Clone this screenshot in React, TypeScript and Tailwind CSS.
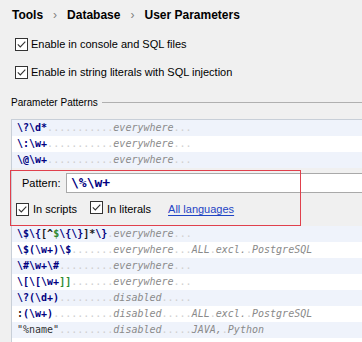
import React from "react";

type Seg = { t: string; c?: string };

const N = "text-[#000080]";
const K = "text-[#1a1a1a]";
const G = "text-[#2f8a2f]";

function Check() {
  return (
    <span className="inline-flex w-[13px] h-[13px] shrink-0 border border-[#333333] bg-white items-center justify-center">
      <svg width="11" height="11" viewBox="0 0 11 11">
        <path d="M1.8 5.4 L4.3 7.9 L9.3 2.6" fill="none" stroke="#333333" strokeWidth="1.1" />
      </svg>
    </span>
  );
}

function Dots({ n }: { n: number }) {
  return <span className="text-[#cfcfcf] font-normal">{".".repeat(Math.max(0, n))}</span>;
}

function Extra({ text }: { text: string }) {
  return (
    <span className="italic text-[#8a8a8a] font-normal">
      {text.split("").map((ch, i) =>
        ch === " " ? (
          <span key={i} className="text-[#cfcfcf] not-italic">.</span>
        ) : (
          <span key={i}>{ch}</span>
        )
      )}
    </span>
  );
}

function Row({ pat, scope, extra, blue }: { pat: Seg[]; scope: string; extra?: string; blue: boolean }) {
  const len = pat.reduce((n, s) => n + s.t.length, 0);
  return (
    <div
      className={`h-[16px] leading-[16px] pl-[5px] whitespace-pre text-[10px] font-['DejaVu_Sans_Mono',monospace] ${
        blue ? "bg-[#eff3fb]" : "bg-white"
      }`}
    >
      <span className="font-bold">
        {pat.map((s, i) => (
          <span key={i} className={s.c ?? N}>
            {s.t}
          </span>
        ))}
      </span>
      <Dots n={16 - len} />
      <span className="italic text-[#8a8a8a]">{scope}</span>
      <Dots n={13 - scope.length} />
      {extra ? <Extra text={extra} /> : null}
    </div>
  );
}

export default function App() {
  return (
    <div className="relative w-[362px] h-[342px] overflow-hidden bg-[#f0f0f0] text-[11px] text-black font-['Liberation_Sans',Arial,sans-serif]">
      {/* breadcrumb */}
      <div className="h-[30px] flex items-center pl-[12px] text-[12px] font-bold">
        <span>Tools</span>
        <span className="mx-[10px] font-normal text-[#808080]">›</span>
        <span>Database</span>
        <span className="mx-[10px] font-normal text-[#808080]">›</span>
        <span>User Parameters</span>
      </div>

      <div className="h-[28px] flex items-center pl-[15px] gap-[3px]">
        <Check />
        <span>Enable in console and SQL files</span>
      </div>
      <div className="h-[28px] flex items-center pl-[15px] gap-[3px]">
        <Check />
        <span>Enable in string literals with SQL injection</span>
      </div>

      <div className="h-[33px] flex items-center pl-[11px] gap-[4px] text-[10px] pb-[1px]">
        <span>Parameter Patterns</span>
        <div className="flex-1 border-t border-[#b0b0b0]" />
      </div>

      {/* list */}
      <div className="ml-[11px] border-l border-t border-[#c8cfd8] bg-white">
        <Row blue pat={[{ t: "\\?\\d*" }]} scope="everywhere" />
        <Row blue={false} pat={[{ t: "\\:\\w+" }]} scope="everywhere" />
        <Row blue pat={[{ t: "\\@\\w+" }]} scope="everywhere" />

        {/* editor panel */}
        <div className="h-[58px] bg-[#f0f0f0] pt-[5px]">
          <div className="h-[20px] flex items-center pl-[10px]">
            <span className="w-[44px] shrink-0">Pattern:</span>
            <div className="w-[320px] shrink-0 h-[20px] bg-white border border-[#a9a9a9] pl-[4px] flex items-center font-['DejaVu_Sans_Mono',monospace] font-bold text-[13px] text-[#000080]">
              \%\w+
            </div>
          </div>
          <div className="h-[33px] flex items-center pl-[4px]">
            <Check />
            <span className="ml-[4px]">In scripts</span>
            <span className="ml-[13px]">
              <Check />
            </span>
            <span className="ml-[4px]">In literals</span>
            <span className="ml-[17px] text-[#1f44c4] underline underline-offset-2">All languages</span>
          </div>
        </div>

        <Row
          blue
          pat={[
            { t: "\\$\\{" },
            { t: "[^", c: K },
            { t: "$", c: G },
            { t: "\\{\\}" },
            { t: "]*", c: K },
            { t: "\\}" },
          ]}
          scope="everywhere"
        />
        <Row blue={false} pat={[{ t: "\\$(\\w+)\\$" }]} scope="everywhere" extra="ALL excl. PostgreSQL" />
        <Row blue pat={[{ t: "\\#\\w+\\#" }]} scope="everywhere" />
        <Row blue={false} pat={[{ t: "\\[\\[\\w+" }, { t: "]]", c: G }]} scope="everywhere" />
        <Row blue pat={[{ t: "\\?(\\d+)" }]} scope="disabled" />
        <Row blue={false} pat={[{ t: ":", c: K }, { t: "(\\w+)" }]} scope="disabled" extra="ALL excl. PostgreSQL" />
        <Row blue pat={[{ t: "\"%name\"", c: "text-[#333333] font-normal" }]} scope="disabled" extra="JAVA, Python" />
        <div className="h-[16px] bg-white" />
      </div>

      {/* annotation highlight */}
      <div className="absolute left-[10px] top-[170px] w-[291px] h-[56px] border border-[#e0404c] pointer-events-none" />
    </div>
  );
}
